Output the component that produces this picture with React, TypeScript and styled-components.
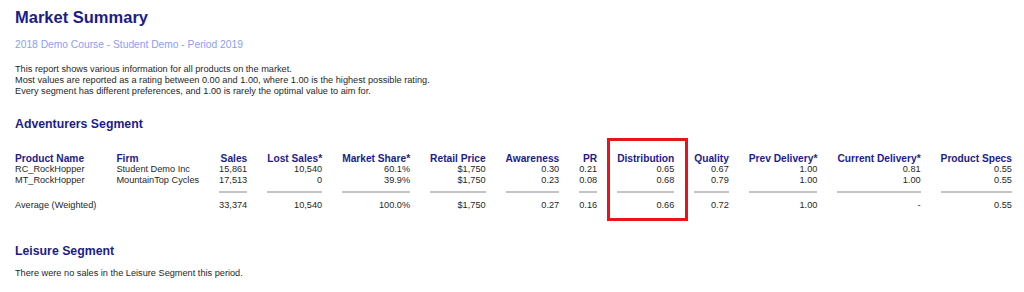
import React from 'react';
import styled, { createGlobalStyle } from 'styled-components';

const NAVY = '#1c1c8a';
const TEXT = '#1f1f1f';

interface ColumnData {
  id: string;
  title: string;
  rows: [string, string];
  average: string;
  numeric: boolean;
  divider: boolean;
  highlighted?: boolean;
}

const ADVENTURERS_COLUMNS: ColumnData[] = [
  { id: 'product', title: 'Product Name', rows: ['RC_RockHopper', 'MT_RockHopper'], average: 'Average (Weighted)', numeric: false, divider: false },
  { id: 'firm', title: 'Firm', rows: ['Student Demo Inc', 'MountainTop Cycles'], average: '', numeric: false, divider: false },
  { id: 'sales', title: 'Sales', rows: ['15,861', '17,513'], average: '33,374', numeric: true, divider: true },
  { id: 'lostSales', title: 'Lost Sales*', rows: ['10,540', '0'], average: '10,540', numeric: true, divider: true },
  { id: 'marketShare', title: 'Market Share*', rows: ['60.1%', '39.9%'], average: '100.0%', numeric: true, divider: true },
  { id: 'retailPrice', title: 'Retail Price', rows: ['$1,750', '$1,750'], average: '$1,750', numeric: true, divider: true },
  { id: 'awareness', title: 'Awareness', rows: ['0.30', '0.23'], average: '0.27', numeric: true, divider: true },
  { id: 'pr', title: 'PR', rows: ['0.21', '0.08'], average: '0.16', numeric: true, divider: true },
  { id: 'distribution', title: 'Distribution', rows: ['0.65', '0.68'], average: '0.66', numeric: true, divider: true, highlighted: true },
  { id: 'quality', title: 'Quality', rows: ['0.67', '0.79'], average: '0.72', numeric: true, divider: true },
  { id: 'prevDelivery', title: 'Prev Delivery*', rows: ['1.00', '1.00'], average: '1.00', numeric: true, divider: true },
  { id: 'currentDelivery', title: 'Current Delivery*', rows: ['0.81', '1.00'], average: '-', numeric: true, divider: true },
  { id: 'productSpecs', title: 'Product Specs', rows: ['0.55', '0.55'], average: '0.55', numeric: true, divider: true },
];

const GlobalStyle = createGlobalStyle`
  html, body {
    margin: 0;
    background: #ffffff;
  }

  body {
    font-family: "Liberation Sans", Arial, sans-serif;
    color: ${TEXT};
  }
`;

const SegmentColumn: React.FC<{ column: ColumnData }> = ({ column }) => (
  <Column numeric={column.numeric} highlighted={!!column.highlighted}>
    <HeaderCell>{column.title}</HeaderCell>
    {column.rows.map((value, index) => (
      <DataCell key={index}>{value || '\u00a0'}</DataCell>
    ))}
    <Divider visible={column.divider} />
    <AverageCell>{column.average || '\u00a0'}</AverageCell>
  </Column>
);

export default function App() {
  return (
    <>
      <GlobalStyle />
      <Page>
        <Title>Market Summary</Title>
        <Subtitle>2018 Demo Course - Student Demo - Period 2019</Subtitle>
        <Intro>
          This report shows various information for all products on the market.
          <br />
          Most values are reported as a rating between 0.00 and 1.00, where 1.00 is the highest possible rating.
          <br />
          Every segment has different preferences, and 1.00 is rarely the optimal value to aim for.
        </Intro>

        <Section>
          <SegmentTitle>Adventurers Segment</SegmentTitle>
          <Table>
            {ADVENTURERS_COLUMNS.map((column) => (
              <SegmentColumn key={column.id} column={column} />
            ))}
          </Table>
        </Section>

        <Section>
          <SegmentTitle>Leisure Segment</SegmentTitle>
          <NoSales>There were no sales in the Leisure Segment this period.</NoSales>
        </Section>
      </Page>
    </>
  );
}

const Page = styled.div`
  display: flex;
  flex-direction: column;
  align-items: flex-start;
  padding: 8px 15px 0;
`;

const Title = styled.h1`
  margin: 0;
  font-size: 16.5px;
  line-height: 19px;
  font-weight: 700;
  color: ${NAVY};
`;

const Subtitle = styled.div`
  margin-top: 12px;
  font-size: 10.25px;
  line-height: 12px;
  color: #8a9ef0;
`;

const Intro = styled.p`
  margin: 13px 0 0;
  font-size: 9.2px;
  line-height: 10.8px;
  color: ${TEXT};
`;

const Section = styled.section`
  display: flex;
  flex-direction: column;
  align-items: flex-start;
  margin-top: 20.6px;
`;

const SegmentTitle = styled.h2`
  margin: 0;
  font-size: 12.3px;
  line-height: 14px;
  font-weight: 700;
  color: ${NAVY};
`;

const Table = styled.div`
  display: flex;
  flex-direction: row;
  column-gap: 20px;
  margin: 22.3px 0 13.2px;
  white-space: nowrap;
`;

const Column = styled.div<{ numeric: boolean; highlighted: boolean }>`
  position: relative;
  display: flex;
  flex-direction: column;
  text-align: ${({ numeric }) => (numeric ? 'right' : 'left')};

  &::after {
    content: '';
    display: ${({ highlighted }) => (highlighted ? 'block' : 'none')};
    position: absolute;
    top: -15px;
    left: -10px;
    right: -14px;
    bottom: -10px;
    border: 3px solid #e8141d;
    pointer-events: none;
  }
`;

const HeaderCell = styled.div`
  font-size: 10.2px;
  line-height: 11px;
  font-weight: 700;
  color: ${NAVY};
`;

const DataCell = styled.div`
  font-size: 9.2px;
  line-height: 11px;
  color: ${TEXT};
`;

const Divider = styled.div<{ visible: boolean }>`
  margin-top: 4.7px;
  height: 2px;
  background: ${({ visible }) => (visible ? '#c4c4c4' : 'transparent')};
`;

const AverageCell = styled(DataCell)`
  margin-top: 6.6px;
`;

const NoSales = styled.p`
  margin: 9.7px 0 0;
  font-size: 9.2px;
  line-height: 10.8px;
  color: ${TEXT};
`;
